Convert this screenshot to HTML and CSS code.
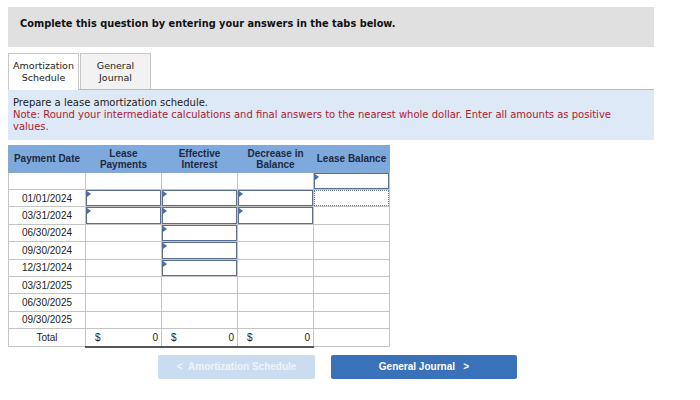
FILE: index.html
```html
<!DOCTYPE html>
<html>
<head>
<meta charset="utf-8">
<link rel="stylesheet" href="styles.css">
</head>
<body>
<div class="page">
  <div class="banner">Complete this question by entering your answers in the tabs below.</div>
  <div class="tabs">
    <div class="tab active">Amortization<br>Schedule</div>
    <div class="tab">General<br>Journal</div>
  </div>
  <div class="instructions">
    <div>Prepare a lease amortization schedule.</div>
    <div class="note">Note: Round your intermediate calculations and final answers to the nearest whole dollar. Enter all amounts as positive values.</div>
  </div>
  <table class="sched">
    <colgroup>
      <col class="c-date">
      <col class="c-num">
      <col class="c-num">
      <col class="c-num">
      <col class="c-num">
    </colgroup>
    <thead>
      <tr>
        <th>Payment Date</th>
        <th>Lease<br>Payments</th>
        <th>Effective<br>Interest</th>
        <th>Decrease in<br>Balance</th>
        <th>Lease Balance</th>
      </tr>
    </thead>
    <tbody>
      <tr class="r0"><td></td><td></td><td></td><td></td><td class="in"><div class="box"></div></td></tr>
      <tr><td class="date">01/01/2024</td><td class="in"><div class="box"></div></td><td class="in"><div class="box"></div></td><td class="in"><div class="box"></div></td><td class="in"><div class="box dotted"></div></td></tr>
      <tr><td class="date">03/31/2024</td><td class="in"><div class="box"></div></td><td class="in"><div class="box"></div></td><td class="in"><div class="box"></div></td><td></td></tr>
      <tr><td class="date">06/30/2024</td><td></td><td class="in"><div class="box"></div></td><td></td><td></td></tr>
      <tr><td class="date">09/30/2024</td><td></td><td class="in"><div class="box"></div></td><td></td><td></td></tr>
      <tr><td class="date">12/31/2024</td><td></td><td class="in"><div class="box"></div></td><td></td><td></td></tr>
      <tr><td class="date">03/31/2025</td><td></td><td></td><td></td><td></td></tr>
      <tr><td class="date">06/30/2025</td><td></td><td></td><td></td><td></td></tr>
      <tr><td class="date">09/30/2025</td><td></td><td></td><td></td><td></td></tr>
      <tr class="total">
        <td class="date">Total</td>
        <td class="sum"><span>$</span><span>0</span></td>
        <td class="sum"><span>$</span><span>0</span></td>
        <td class="sum"><span>$</span><span>0</span></td>
        <td></td>
      </tr>
    </tbody>
  </table>
  <div class="nav">
    <div class="btn prev">&lt;&nbsp;&nbsp;Amortization Schedule</div>
    <div class="btn next">General Journal&nbsp;&nbsp;&nbsp;&gt;</div>
  </div>
</div>
</body>
</html>
```
FILE: styles.css
```css
html, body {
  margin: 0;
  padding: 0;
  background: #ffffff;
}
.page {
  width: 646px;
  margin: 7px 0 0 8px;
  font-family: "DejaVu Sans", Verdana, sans-serif;
}
.banner {
  background: #e0e0e0;
  height: 40px;
  box-sizing: border-box;
  padding: 11px 0 0 12px;
  font-size: 9.8px;
  font-weight: bold;
  color: #111;
}
.tabs {
  display: flex;
  margin-top: 6px;
  height: 36px;
}
.tab {
  width: 71px;
  box-sizing: border-box;
  border: 1px solid #c8c8c8;
  border-bottom: none;
  background: #f2f2f2;
  font-size: 9.5px;
  line-height: 12px;
  text-align: center;
  padding-top: 6px;
  color: #222;
  margin-right: 1px;
}
.tab.active {
  background: #ffffff;
  position: relative;
  z-index: 1;
  margin-bottom: -1px;
}
.instructions {
  background: #dde9f7;
  border-top: 1px solid #b9b9b9;
  box-sizing: border-box;
  height: 51px;
  padding: 7px 0 0 5px;
  font-size: 10px;
  line-height: 12px;
  color: #222;
}
.note {
  color: #b0202e;
  padding-right: 40px;
}
.sched {
  margin-top: 5px;
  border-collapse: collapse;
  table-layout: fixed;
  width: 381px;
  font-family: "Liberation Sans", Arial, sans-serif;
  font-size: 10px;
  color: #222;
}
.c-date {
  width: 77px;
}
.c-num {
  width: 76px;
}
.sched th {
  background: #7ea9dd;
  border: 1px solid #8aa8cc;
  height: 26px;
  padding: 0;
  font-size: 10px;
  line-height: 11.5px;
  color: #1c2a44;
  font-weight: bold;
}
.sched td {
  border: 1px solid #c4c4c4;
  height: 16.4px;
  padding: 0;
  position: relative;
}
.sched tr.r0 td {
  height: 16px;
}
.sched td.date {
  text-align: center;
}
.box {
  position: absolute;
  left: 0;
  top: 0;
  right: 0;
  bottom: 0;
  border: 1.5px solid #5a6f8f;
}
.box::before {
  content: "";
  position: absolute;
  left: 0;
  top: 0;
  border-top: 3px solid transparent;
  border-bottom: 3px solid transparent;
  border-left: 4px solid #3f6fb5;
}
.box.dotted {
  border: 1.5px dotted #6b7f9c;
}
.box.dotted::before {
  display: none;
}
.sum span:first-child {
  float: left;
  padding-left: 9px;
}
.sum span:last-child {
  float: right;
  padding-right: 3px;
}
.total td.sum {
  border-bottom: 2px solid #555;
  border-top: 1px solid #555;
}
.nav {
  display: flex;
  margin: 7px 0 0 150px;
  gap: 16px;
}
.btn {
  height: 24px;
  line-height: 24px;
  text-align: center;
  font-family: "Liberation Sans", Arial, sans-serif;
  font-weight: bold;
  font-size: 10px;
  color: #ffffff;
  border-radius: 2px;
}
.btn.prev {
  width: 157px;
  background: #c9dcf0;
  color: #eef4fb;
}
.btn.next {
  width: 186px;
  background: #3a72b9;
}
```
